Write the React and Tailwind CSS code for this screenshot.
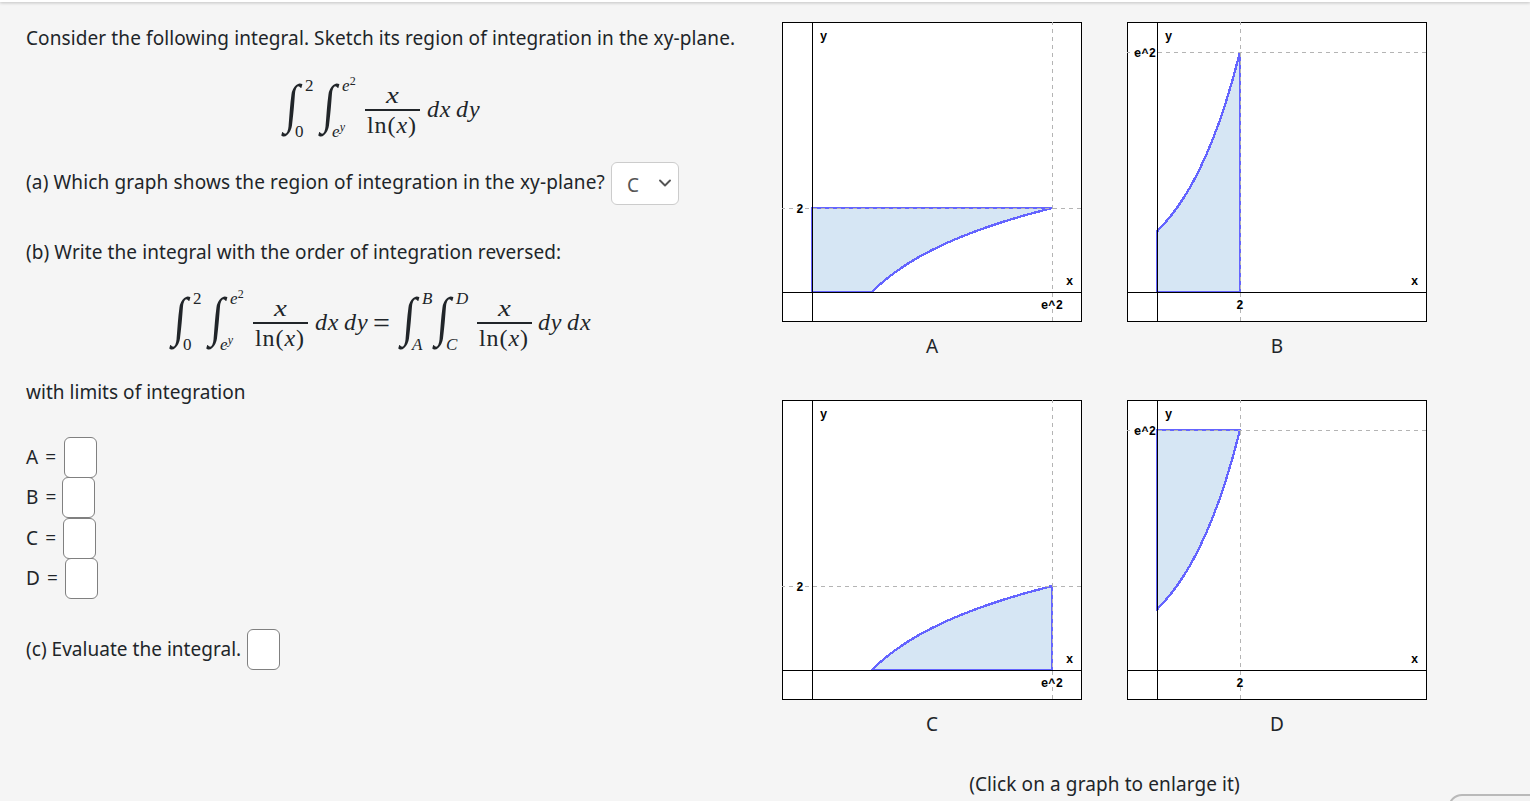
import React, { useState } from 'react';
import { ChevronDown } from 'lucide-react';

const steps = Array.from({ length: 13 }, (_, i) => i / 12);

// log curve from (90, 270) to (270, 186) and its mirror image, the exponential
const logCurve = steps.map(t => `${(30 + 60 * Math.pow(4, t)).toFixed(1)},${(270 - 84 * t).toFixed(1)}`);
const expCurve = steps.map(t => `${(30 + 83 * t).toFixed(1)},${(270 - 60.5 * Math.pow(3.967, t)).toFixed(1)}`);

const GRAPHS = [
  { name: 'A', curve: logCurve, points: ['30,270', ...logCurve, '30,186'], vx: 270, hy: 186, xTick: 'e^2', yTick: '2' },
  { name: 'B', curve: expCurve, points: ['30,270', ...expCurve, '113,270'], vx: 113, hy: 30, xTick: '2', yTick: 'e^2' },
  { name: 'C', curve: logCurve, points: [...logCurve, '270,270'], vx: 270, hy: 186, xTick: 'e^2', yTick: '2' },
  { name: 'D', curve: expCurve, points: [...expCurve, '30,30'], vx: 113, hy: 30, xTick: '2', yTick: 'e^2' }
];

const Graph = ({ graph }) => {
  const { name, curve, points, vx, hy, xTick, yTick } = graph;
  return (
    <figure className="w-[300px]">
      <svg width="300" height="300" viewBox="0 0 300 300" className="block cursor-pointer bg-white">
        <g shapeRendering="crispEdges">
          <rect x="0.5" y="0.5" width="299" height="299" fill="none" stroke="#000" />
          <polygon points={points.join(' ')} fill="#d6e6f4" stroke="#6464ff" strokeWidth="2" />
          <polyline points={curve.join(' ')} fill="none" stroke="#6464ff" strokeWidth="2.3" />
          <path d={`M${vx + 0.5} 0V300M0 ${hy + 0.5}H300`} stroke="#b4b4b4" strokeDasharray="4 4" strokeDashoffset="1" fill="none" />
          <path d="M30.5 0V300M0 270.5H300" stroke="#000" fill="none" />
        </g>
        <g className="font-['Liberation_Mono',monospace] text-[12px] font-bold" fill="#000">
          <text x="38" y="18">y</text>
          <text x="284" y="263">x</text>
          <text x={vx} y="287" textAnchor="middle">{xTick}</text>
          <text x={yTick === '2' ? 21.5 : 29} y={hy + 5} textAnchor="end">{yTick}</text>
        </g>
      </svg>
      <figcaption className="mt-[10px] text-center leading-[28px]">{name}</figcaption>
    </figure>
  );
};

const Var = ({ children }) => <span className="inline-block scale-x-[1.2] italic">{children}</span>;

const Integral = ({ from, to, width }) => (
  <div className={`flex h-[70px] shrink-0 ${width}`}>
    <span className="w-[12px] shrink-0 pl-[2px]">
      <span className="inline-block origin-center scale-x-[0.82] -skew-x-6 text-[54px] leading-[56px]">∫</span>
    </span>
    <div className="flex h-[66px] flex-col justify-between text-[17px] leading-[20px]">
      <span className="pl-[10px]">{to}</span>
      <span>{from}</span>
    </div>
  </div>
);

const Sup = ({ children }) => <sup className="-top-[6px] text-[12px] leading-none">{children}</sup>;

const Fraction = () => (
  <div className="flex h-[70px] w-[55px] shrink-0 flex-col items-center pt-[8px] text-[24px]">
    <span className="h-[25px] leading-[22px]"><Var>x</Var></span>
    <span className="h-[1.5px] w-full shrink-0 bg-[#212529]" />
    <span className="w-[51px] leading-[29px] tracking-[0.9px]">ln(<i>x</i>)</span>
  </div>
);

// the two variables sit close together, as in typeset differentials
const Differentials = ({ first, second }) => (
  <span className="whitespace-nowrap pt-[18px] text-[24px] italic tracking-[0.8px] [word-spacing:-2px]">
    d{first} d{second}
  </span>
);

const LeftIntegral = () => (
  <>
    <Integral width="w-[37px]" from="0" to="2" />
    <Integral width="w-[45px]" from={<><i>e</i><Sup><i>y</i></Sup></>} to={<><i>e</i><Sup>2</Sup></>} />
    <Fraction />
  </>
);

const AnswerBox = () => (
  <input type="text" className="h-[41px] w-[33px] rounded-[6px] border border-[#808080] bg-white" />
);

const LIMITS = [
  { label: 'A =', width: 'w-[38px]' },
  { label: 'B =', width: 'w-[36px]' },
  { label: 'C =', width: 'w-[37px]' },
  { label: 'D =', width: 'w-[39px]' }
];

export default function App() {
  const [open, setOpen] = useState(false);

  return (
    <div className="relative h-[801px] overflow-hidden bg-[#f5f5f5] font-['Noto_Sans',sans-serif] text-[19px] leading-[30px] tracking-[0.1px] text-[#212529]">
      <div className="h-[2px] bg-white shadow-[0_1px_3px_rgba(0,0,0,0.25)]" />
      <div className="flex">
        <main className="w-[782px] shrink-0 pl-[26px] pt-[21px]">
          <p className="whitespace-nowrap">Consider the following integral. Sketch its region of integration in the xy-plane.</p>

          <div className="mt-[23px] flex h-[70px] pl-[257px] font-['Liberation_Serif',serif] text-[23px]">
            <LeftIntegral />
            <span className="flex pl-[7px]"><Differentials first="x" second="y" /></span>
          </div>

          <div className="mt-[16px] flex">
            <p className="w-[585px] whitespace-nowrap pt-[5px] tracking-[0.14px]">(a) Which graph shows the region of integration in the xy-plane?</p>
            <button
              type="button"
              onClick={() => setOpen(!open)}
              className="flex h-[43px] w-[68px] items-center justify-between rounded-[6px] border border-[#ccc] bg-white pl-[15px] pr-[3px] pt-[2px] text-[#555]"
            >
              C
              <ChevronDown size={20} strokeWidth={2.3} className="mb-[4px]" />
            </button>
          </div>

          <p className="mt-[32px] whitespace-nowrap tracking-[0.08px]">(b) Write the integral with the order of integration reversed:</p>

          <div className="mt-[22px] flex h-[70px] pl-[145px] font-['Liberation_Serif',serif] text-[23px]">
            <LeftIntegral />
            <span className="flex w-[65px] pl-[7px]"><Differentials first="x" second="y" /></span>
            <span className="w-[27px] pt-[19px] text-[30px]">=</span>
            <Integral width="w-[34px]" from={<i>A</i>} to={<i>B</i>} />
            <Integral width="w-[43px]" from={<i>C</i>} to={<i>D</i>} />
            <Fraction />
            <span className="flex pl-[6px]"><Differentials first="y" second="x" /></span>
          </div>

          <p className="mt-[18px] tracking-[0.03px]">with limits of integration</p>

          <div className="mt-[30px]">
            {LIMITS.map(({ label, width }) => (
              <div key={label} className="flex h-[40.4px]">
                <label className={`whitespace-nowrap pt-[5px] [word-spacing:2px] ${width}`}>{label}</label>
                <AnswerBox />
              </div>
            ))}
          </div>

          <div className="mt-[30px] flex">
            <p className="w-[221px] whitespace-nowrap pt-[5px] tracking-[0.03px]">(c) Evaluate the integral.</p>
            <AnswerBox />
          </div>
        </main>

        <aside className="w-[645px] pt-[20px]">
          <div className="grid grid-cols-2 gap-x-[45px] gap-y-[40px]">
            {GRAPHS.map(g => <Graph key={g.name} graph={g} />)}
          </div>
          <p className="mt-[31px] text-center">(Click on a graph to enlarge it)</p>
        </aside>
      </div>
      <div className="absolute left-[1448px] top-[794px] h-[40px] w-[120px] rounded-[14px] border-2 border-[#b9b9b9] bg-[#f2f2f2]" />
    </div>
  );
}
